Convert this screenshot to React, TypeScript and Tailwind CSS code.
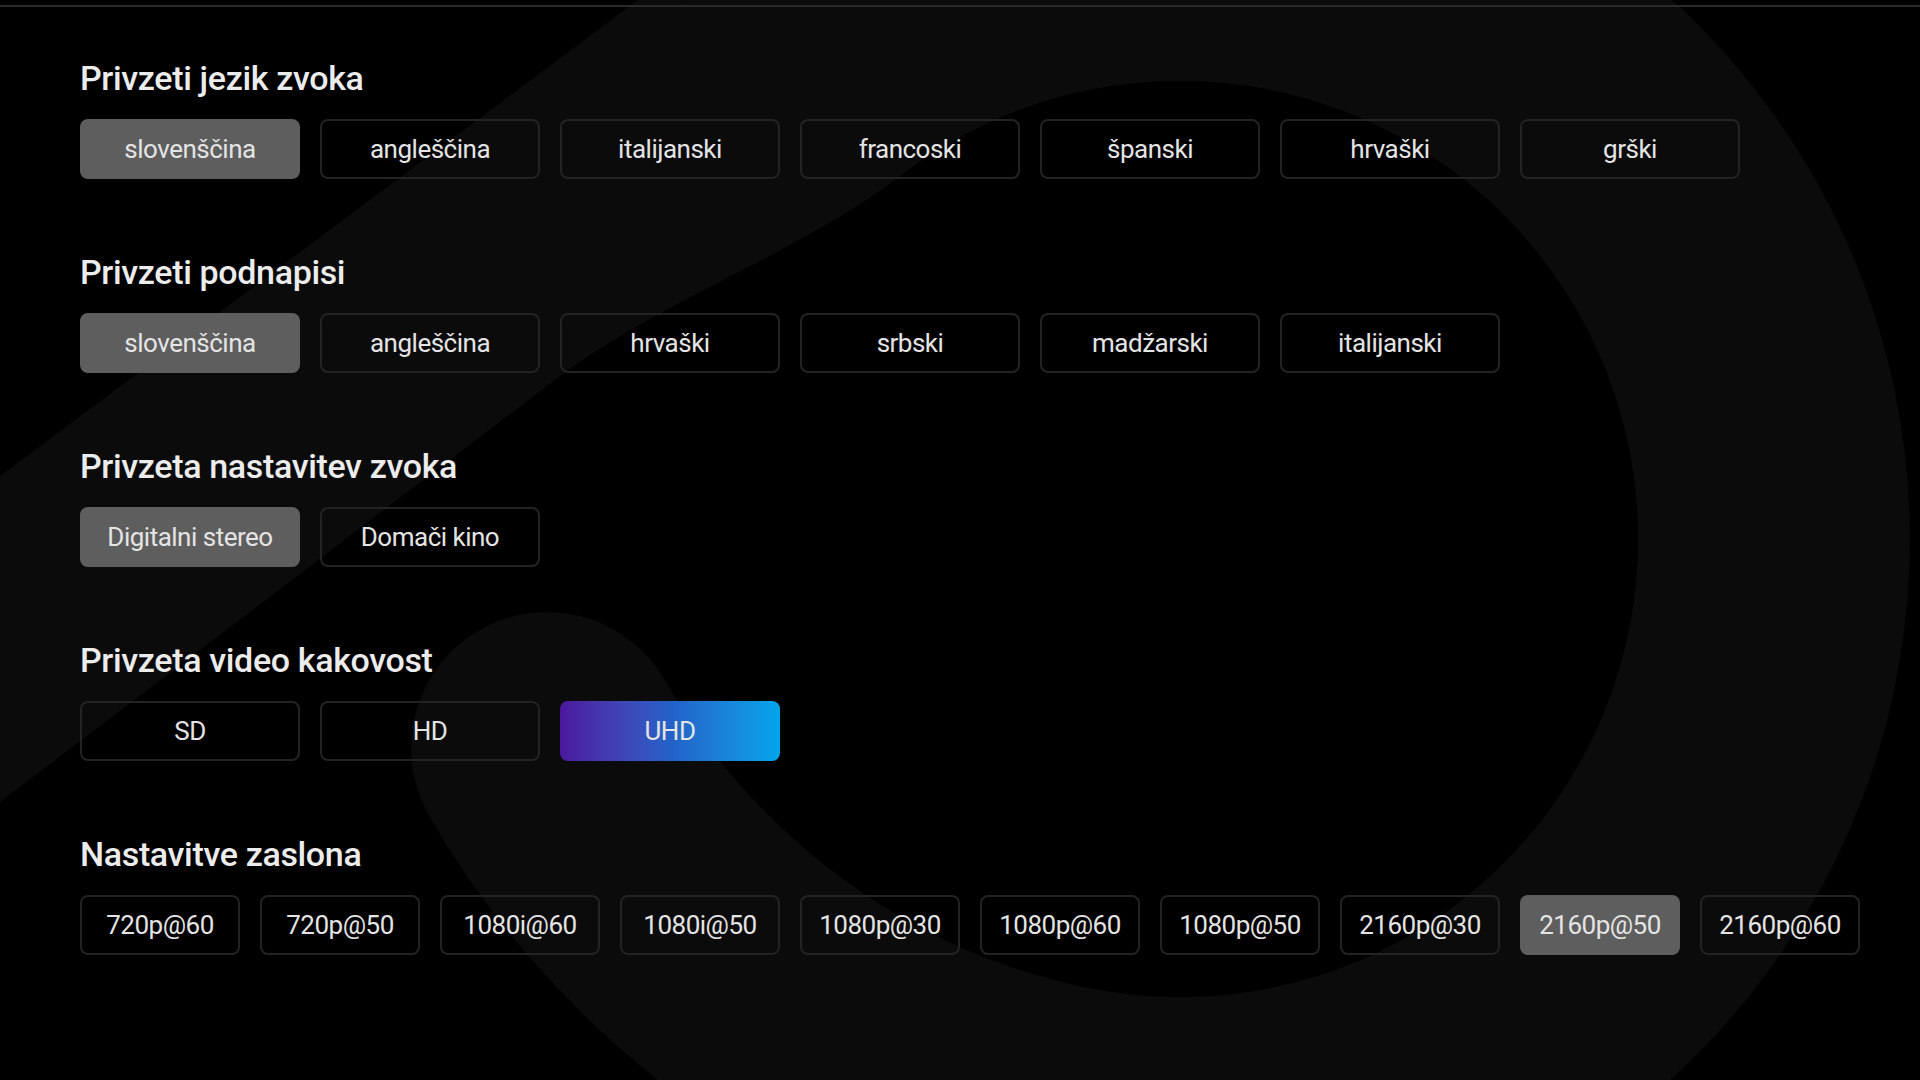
import React from 'react';

type Variant = 'default' | 'selected' | 'accent';

interface Section {
  title: string;
  wide: boolean;
  options: { label: string; variant?: Variant }[];
}

const SECTIONS: Section[] = [
  {
    title: 'Privzeti jezik zvoka',
    wide: true,
    options: [
      { label: 'slovenščina', variant: 'selected' },
      { label: 'angleščina' },
      { label: 'italijanski' },
      { label: 'francoski' },
      { label: 'španski' },
      { label: 'hrvaški' },
      { label: 'grški' },
    ],
  },
  {
    title: 'Privzeti podnapisi',
    wide: true,
    options: [
      { label: 'slovenščina', variant: 'selected' },
      { label: 'angleščina' },
      { label: 'hrvaški' },
      { label: 'srbski' },
      { label: 'madžarski' },
      { label: 'italijanski' },
    ],
  },
  {
    title: 'Privzeta nastavitev zvoka',
    wide: true,
    options: [{ label: 'Digitalni stereo', variant: 'selected' }, { label: 'Domači kino' }],
  },
  {
    title: 'Privzeta video kakovost',
    wide: true,
    options: [{ label: 'SD' }, { label: 'HD' }, { label: 'UHD', variant: 'accent' }],
  },
  {
    title: 'Nastavitve zaslona',
    wide: false,
    options: [
      { label: '720p@60' },
      { label: '720p@50' },
      { label: '1080i@60' },
      { label: '1080i@50' },
      { label: '1080p@30' },
      { label: '1080p@60' },
      { label: '1080p@50' },
      { label: '2160p@30' },
      { label: '2160p@50', variant: 'selected' },
      { label: '2160p@60' },
    ],
  },
];

const VARIANT_CLASS: Record<Variant, string> = {
  default: 'border-2 border-[#232323] bg-transparent',
  selected: 'bg-[#5e5e5e]',
  accent: 'bg-linear-to-r from-[#4a179d] via-[#2361c8] to-[#00a5ea]',
};

// big swirl mark behind the settings
function Backdrop() {
  return (
    <svg
      className="absolute inset-0 h-full w-full"
      viewBox="0 0 1920 1080"
      preserveAspectRatio="none"
      aria-hidden
    >
      <polygon points="0,476 906,-200 1319,-200 0,802" fill="#0b0b0b" />
      <path
        d="M 595 435 A 594 594 0 1 1 1076.9 1124 C 831 1080 647 922 547 748"
        fill="none"
        stroke="#0b0b0b"
        strokeWidth={272}
      />
      <circle cx={547} cy={748} r={136} fill="#0b0b0b" />
      <path d="M 318 560 L 555 380 C 658 301 800 253 903 174 L 1180 539 Z" fill="#000" />
      <circle cx={1180} cy={539} r={458} fill="#000" />
    </svg>
  );
}

function OptionButton({ label, variant = 'default', wide }: { label: string; variant?: Variant; wide: boolean }) {
  return (
    <button
      className={`flex h-[60px] items-center justify-center rounded-[8px] text-[26px] tracking-[-0.5px] text-[#e4e4e4] ${
        wide ? 'w-[220px]' : 'w-[160px]'
      } ${VARIANT_CLASS[variant]}`}
    >
      {label}
    </button>
  );
}

export default function App() {
  return (
    <div className="relative h-screen w-full overflow-hidden bg-black font-['Roboto','Noto_Sans',sans-serif]">
      <Backdrop />
      <div className="relative">
        <div className="mt-[5px] h-[2px] w-full bg-[#2a2a2a]" />
        <div className="flex flex-col gap-[73px] pl-[80px] pt-[51px]">
          {SECTIONS.map((section) => (
            <section key={section.title} className="flex flex-col gap-[21px]">
              <h2 className="text-[34px] font-medium leading-[40px] tracking-[-0.35px] text-[#ececec]">
                {section.title}
              </h2>
              <div className="flex gap-[20px]">
                {section.options.map((opt) => (
                  <OptionButton key={opt.label} label={opt.label} variant={opt.variant} wide={section.wide} />
                ))}
              </div>
            </section>
          ))}
        </div>
      </div>
    </div>
  );
}
